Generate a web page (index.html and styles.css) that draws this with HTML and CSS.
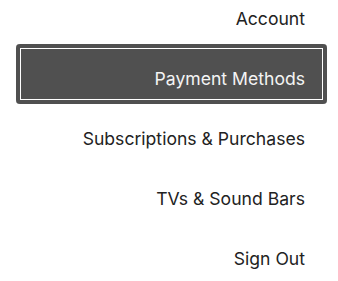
FILE: index.html
```html
<!DOCTYPE html>
<html lang="en">
<head>
  <meta charset="UTF-8">
  <meta name="viewport" content="width=device-width, initial-scale=1.0">
  <title>Account Menu</title>
  <link rel="stylesheet" href="styles.css">
</head>
<body>
  <ul class="menu">
    <li class="menu-item">Account</li>
    <li class="menu-item selected">Payment Methods</li>
    <li class="menu-item">Subscriptions &amp; Purchases</li>
    <li class="menu-item">TVs &amp; Sound Bars</li>
    <li class="menu-item">Sign Out</li>
  </ul>
</body>
</html>
```
FILE: styles.css
```css
body {
  margin: 0;
  font-family: Inter, "Liberation Sans", sans-serif;
  background: white;
  color: #222;
  overflow: hidden;
}

.menu {
  list-style: none;
  margin: -16px 11px 0 16px;
  padding: 0;
}

.menu-item {
  height: 60px;
  box-sizing: border-box;
  display: flex;
  justify-content: flex-end;
  align-items: flex-end;
  padding: 0 22px 15px 0;
  font-size: 17.6px;
  line-height: 20px;
}

.selected {
  background: #505050;
  color: #f4f4f4;
  border-radius: 4px;
  box-shadow: inset 0 0 0 4px #505050, inset 0 0 0 5px #fff;
}
```
